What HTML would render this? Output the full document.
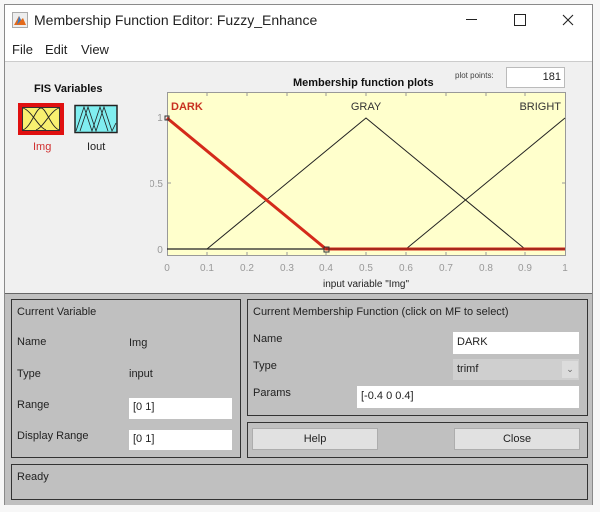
<!DOCTYPE html>
<html><head><style>
body{margin:0;width:600px;height:512px;background:#f7f7f7;position:relative;overflow:hidden;font-family:"Liberation Sans",sans-serif;}
.a{position:absolute;}
.win{left:4px;top:4px;width:589px;height:501px;background:#fff;border:1px solid #8a8a8a;box-sizing:border-box;}
.t{font-size:11px;color:#222;white-space:nowrap;}
.box{border:1px solid #333;box-sizing:border-box;}
.inp{background:#fff;box-sizing:border-box;font-size:11px;color:#222;padding:3px 0 0 4px;}
.btn{background:#e1e1e1;border:1px solid #adadad;box-sizing:border-box;text-align:center;font-size:11px;color:#222;line-height:20px;}
</style></head><body>
<div class="a win"></div>
<svg class="a" style="left:12px;top:12px" width="16" height="16"><rect x="0.5" y="0.5" width="15" height="15" fill="#eee" stroke="#aaa"/><path d="M2 13 L7 4 L9 8 L11 6 L14 13Z" fill="#e46a1b"/><path d="M7 4 L9 8 L5 13Z" fill="#3a7dc4"/></svg>
<div class="a" style="left:34px;top:12px;font-size:14px;color:#222">Membership Function Editor: Fuzzy_Enhance</div>
<div class="a" style="left:466px;top:19px;width:11px;height:1px;background:#222"></div>
<div class="a" style="left:514px;top:14px;width:10px;height:10px;border:1px solid #222"></div>
<svg class="a" style="left:562px;top:14px" width="12" height="12"><path d="M1 1L11 11M11 1L1 11" stroke="#222" stroke-width="1.1"/></svg>
<div class="a" style="left:12px;top:42px;font-size:13px;color:#222">File</div>
<div class="a" style="left:45px;top:42px;font-size:13px;color:#222">Edit</div>
<div class="a" style="left:81px;top:42px;font-size:13px;color:#222">View</div>
<div class="a" style="left:5px;top:61px;width:587px;height:232px;background:#f0f0f0;border-top:1px solid #ccc"></div>
<div class="a" style="left:34px;top:83px;font-size:11px;font-weight:bold;color:#111">FIS Variables</div>
<svg class="a" style="left:18px;top:103px" width="110" height="34">
<rect x="0" y="0" width="46" height="32" fill="#e01010"/>
<rect x="4" y="4" width="38" height="24" fill="#f8f070"/>
<rect x="4.5" y="4.5" width="37" height="23" fill="none" stroke="#333" stroke-width="1"/>
<path d="M5 5 C14 8,20 24,28 27 M5 27 C13 24,18 5,23 5 C28 5,33 24,41 27 M18 27 C26 24,32 8,41 5" stroke="#222" fill="none" stroke-width="0.9"/>
<rect x="57" y="2.5" width="42" height="27" fill="#80eef0" stroke="#222" stroke-width="1.5"/>
<path d="M58 28 L66 4 L74 28 L82 4 L90 28 M62 28 L70 4 L78 28 L86 4 L94 28 L98 20" stroke="#222" fill="none" stroke-width="0.8"/>
</svg>
<div class="a" style="left:33px;top:141px;font-size:11px;color:#d03030">Img</div>
<div class="a" style="left:87px;top:141px;font-size:11px;color:#222">Iout</div>
<div class="a" style="left:293px;top:77px;font-size:11px;font-weight:bold;color:#111">Membership function plots</div>
<div class="a" style="left:455px;top:71px;font-size:8px;color:#444">plot points:</div>
<div class="a" style="left:506px;top:67px;width:59px;height:21px;background:#fff;border:1px solid #bbb;box-sizing:border-box;font-size:11px;text-align:right;padding:3px 3px 0 0;color:#222">181</div>
<svg class="a" style="left:150px;top:88px" width="430" height="205">
<rect x="17.5" y="4.5" width="398" height="163" fill="#ffffcc" stroke="#999"/>
<g stroke="#999" stroke-width="1">
<path d="M57 5v3M97 5v3M137 5v3M176 5v3M216 5v3M256 5v3M296 5v3M336 5v3M375 5v3"/>
<path d="M57 167v-3M97 167v-3M137 167v-3M176 167v-3M216 167v-3M256 167v-3M296 167v-3M336 167v-3M375 167v-3"/>
<path d="M18 95h3M415 95h-3"/>
</g>
<path d="M17 161 L415 161" stroke="#222" stroke-width="1.2"/>
<path d="M57 161 L216 30 L375 161" stroke="#222" stroke-width="1" fill="none"/>
<path d="M256 161 L415 30" stroke="#222" stroke-width="1" fill="none"/>
<path d="M17 30 L176 161 L415 161" stroke="#d42a1a" stroke-width="3" fill="none"/>
<path d="M176 161 L415 161" stroke="#222" stroke-width="1" fill="none" opacity="0.5"/>
<rect x="15" y="28" width="4" height="4" fill="none" stroke="#333"/>
<rect x="174" y="159" width="5" height="5" fill="none" stroke="#333"/>
<g font-family="Liberation Sans" font-size="10" fill="#999" text-anchor="middle">
<text x="10" y="33">1</text><text x="6" y="99">0.5</text><text x="10" y="165">0</text>
<text x="17" y="183">0</text><text x="57" y="183">0.1</text><text x="97" y="183">0.2</text><text x="137" y="183">0.3</text><text x="176" y="183">0.4</text><text x="216" y="183">0.5</text><text x="256" y="183">0.6</text><text x="296" y="183">0.7</text><text x="336" y="183">0.8</text><text x="375" y="183">0.9</text><text x="415" y="183">1</text>
</g>
<text x="216" y="199" font-family="Liberation Sans" font-size="10" fill="#222" text-anchor="middle">input variable "Img"</text>
<text x="21" y="22" font-family="Liberation Sans" font-size="11" font-weight="bold" fill="#c83020">DARK</text>
<text x="216" y="22" font-family="Liberation Sans" font-size="11" fill="#333" text-anchor="middle">GRAY</text>
<text x="411" y="22" font-family="Liberation Sans" font-size="11" fill="#333" text-anchor="end">BRIGHT</text>
</svg>
<div class="a" style="left:5px;top:293px;width:587px;height:211px;background:#c0c0c0;border-top:1px solid #666"></div>
<div class="a box" style="left:11px;top:299px;width:230px;height:159px"></div>
<div class="a t" style="left:17px;top:306px">Current Variable</div>
<div class="a t" style="left:17px;top:336px">Name</div>
<div class="a t" style="left:129px;top:337px">Img</div>
<div class="a t" style="left:17px;top:368px">Type</div>
<div class="a t" style="left:129px;top:368px">input</div>
<div class="a t" style="left:17px;top:399px">Range</div>
<div class="a inp" style="left:129px;top:398px;width:103px;height:21px">[0 1]</div>
<div class="a t" style="left:17px;top:430px">Display Range</div>
<div class="a inp" style="left:129px;top:430px;width:103px;height:20px">[0 1]</div>
<div class="a box" style="left:247px;top:299px;width:341px;height:117px"></div>
<div class="a t" style="left:253px;top:306px">Current Membership Function (click on MF to select)</div>
<div class="a t" style="left:253px;top:333px">Name</div>
<div class="a inp" style="left:453px;top:332px;width:126px;height:22px;padding-top:4px">DARK</div>
<div class="a t" style="left:253px;top:360px">Type</div>
<div class="a inp" style="left:453px;top:359px;width:126px;height:21px;background:#cfcfcf;padding-top:4px">trimf</div>
<div class="a" style="left:562px;top:361px;width:16px;height:17px;background:#dcdcdc;font-size:9px;color:#666;text-align:center;line-height:17px">&#8964;</div>
<div class="a t" style="left:253px;top:387px">Params</div>
<div class="a inp" style="left:357px;top:386px;width:222px;height:22px;padding-top:4px">[-0.4 0 0.4]</div>
<div class="a box" style="left:247px;top:422px;width:341px;height:36px"></div>
<div class="a btn" style="left:252px;top:428px;width:126px;height:22px">Help</div>
<div class="a btn" style="left:454px;top:428px;width:126px;height:22px">Close</div>
<div class="a box" style="left:11px;top:464px;width:577px;height:36px"></div>
<div class="a t" style="left:17px;top:471px">Ready</div>
</body></html>
